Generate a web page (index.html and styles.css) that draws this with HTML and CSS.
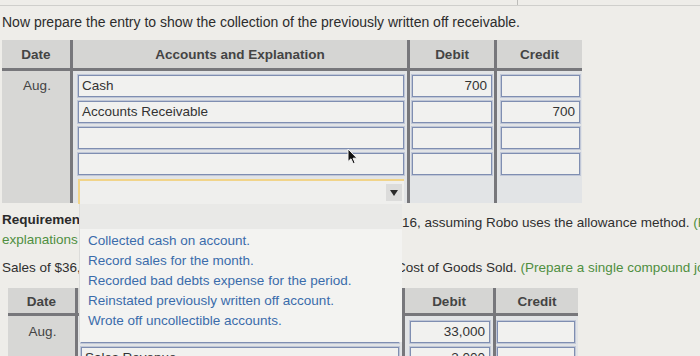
FILE: index.html
```html
<!DOCTYPE html>
<html lang="en">
<head>
<meta charset="utf-8">
<title>Journal entry</title>
<link rel="stylesheet" href="styles.css">
</head>
<body>
<div class="page">
  <div class="topbar"><span class="topbar-split"></span></div>
  <p class="lead">Now prepare the entry to show the collection of the previously written off receivable.</p>

  <div class="jt jt-one">
    <div class="hd">Date</div>
    <div class="hd bl">Accounts and Explanation</div>
    <div class="hd bl">Debit</div>
    <div class="hd bl">Credit</div>

    <div class="col col-date"><span class="date-txt">Aug.</span></div>
    <div class="col col-acct bl">
      <div class="field">Cash</div>
      <div class="field">Accounts Receivable</div>
      <div class="field"></div>
      <div class="field"></div>
      <div class="select">
        <span class="select-btn"><span class="tri"></span></span>
        <div class="menu">
          <div class="opt opt-blank"></div>
          <div class="opt">Collected cash on account.</div>
          <div class="opt">Record sales for the month.</div>
          <div class="opt">Recorded bad debts expense for the period.</div>
          <div class="opt">Reinstated previously written off account.</div>
          <div class="opt">Wrote off uncollectible accounts.</div>
        </div>
      </div>
    </div>
    <div class="col col-debit bl">
      <div class="field num">700</div>
      <div class="field num"></div>
      <div class="field num"></div>
      <div class="field num"></div>
    </div>
    <div class="col col-credit bl">
      <div class="field num"></div>
      <div class="field num">700</div>
      <div class="field num"></div>
      <div class="field num"></div>
    </div>
  </div>

  <div class="req">
    <div class="req-line l1">
      <span class="req-left"><b>Requirement</b></span>
      <span class="req-right r1">16, assuming Robo uses the allowance method. <span class="green">(Record debits first, then credits.</span></span>
    </div>
    <div class="req-line l2">
      <span class="req-left green">explanations</span>
      <span class="req-right"></span>
    </div>
    <div class="req-line l3">
      <span class="req-left narrow">Sales of $36,000</span>
      <span class="req-right shift">Cost of Goods Sold. <span class="green">(Prepare a single compound journal entry.)</span></span>
    </div>
  </div>

  <div class="jt jt-two">
    <div class="hd">Date</div>
    <div class="hd bl"></div>
    <div class="hd bl">Debit</div>
    <div class="hd bl">Credit</div>

    <div class="col col-date"><span class="date-txt">Aug.</span></div>
    <div class="col col-acct bl">
      <div class="field"></div>
      <div class="field">Sales Revenue</div>
    </div>
    <div class="col col-debit bl">
      <div class="field num">33,000</div>
      <div class="field num">3,000</div>
    </div>
    <div class="col col-credit bl">
      <div class="field num"></div>
      <div class="field num"></div>
    </div>
  </div>

  <svg class="cursor" width="12" height="17" viewBox="0 0 12 17" aria-hidden="true">
    <path d="M1 1 L1 13.5 L4 10.8 L6.2 15.6 L8.1 14.8 L6 10.2 L10 10.2 Z" fill="#111" stroke="#f4f4f4" stroke-width="1"/>
  </svg>
</div>
</body>
</html>
```

FILE: styles.css
```css
* { box-sizing: border-box; }

html, body {
  margin: 0;
  padding: 0;
  background: #eeede9;
  overflow: hidden;
}

body {
  font-family: "Liberation Sans", Arial, sans-serif;
  font-size: 13.5px;
  color: #333;
  width: 700px;
  height: 356px;
}

.page {
  position: relative;
  width: 700px;
  height: 356px;
  overflow: hidden;
}

.topbar {
  height: 6px;
  border-bottom: 1px solid #cfcfcc;
  position: relative;
}
.topbar-split {
  position: absolute;
  left: 517px;
  top: 0;
  width: 1px;
  height: 5px;
  background: #bdbdba;
}

.lead {
  margin: 8px 0 0 2px;
  font-size: 14px;
  line-height: 16px;
  height: 16px;
  white-space: nowrap;
  color: #2c2c2c;
}

/* journal tables */
.jt {
  display: grid;
}
.jt-one {
  margin: 10px 0 0 2px;
  width: 580px;
  grid-template-columns: 68px 337px 87px 88px;
}
.jt-two {
  margin: 0 0 0 8px;
  width: 570px;
  grid-template-columns: 67px 327px 91px 85px;
}

.hd {
  height: 31px;
  background: #d5d5d3;
  border-bottom: 3px solid #77777b;
  display: flex;
  align-items: center;
  justify-content: center;
  font-weight: bold;
  color: #444;
  padding-top: 1px;
}
.jt-two .hd { height: 28px; }

.bl { border-left: 3px solid #77777b; }

.col {
  display: flex;
  flex-direction: column;
  gap: 4px;
  padding-top: 4px;
  background: #e2e4e6;
}
.col-date {
  background: #d7d7d5;
  align-items: center;
}
.date-txt {
  color: #444;
  line-height: 22px;
  padding-left: 2px;
}

.jt-one .col { height: 132px; }
.jt-one .col-acct { padding: 4px 3px 0 5px; }
.jt-one .col-debit { padding: 4px 2px 0 2px; }
.jt-one .col-credit { padding: 4px 2px 0 4px; }

.jt-two .col { height: 60px; padding-top: 5px; }
.jt-two .col-date { padding-top: 5px; }
.jt-two .col-acct { padding-left: 3px; padding-right: 3px; }
.jt-two .col-debit { padding-left: 5px; padding-right: 3px; }
.jt-two .col-credit { padding-left: 1px; padding-right: 3px; }

.field {
  height: 22px;
  background: #f1f1ef;
  border: 1px solid #7f8eb1;
  box-shadow: 0 0 0 1px rgba(150, 165, 198, 0.45);
  line-height: 20px;
  padding: 0 3px;
  white-space: nowrap;
  overflow: hidden;
  color: #333;
  flex: none;
}
.field.num {
  text-align: right;
  padding-right: 4px;
}

.select {
  position: relative;
  height: 25px;
  background: #efefed;
  border: 2px solid #f1d48a;
  border-bottom: none;
  border-right: none;
  flex: none;
}
.select-btn {
  position: absolute;
  right: 2px;
  top: 3px;
  width: 16px;
  height: 17px;
  background: #dcdcdb;
  display: flex;
  align-items: center;
  justify-content: center;
}
.tri {
  width: 0;
  height: 0;
  border-left: 4px solid transparent;
  border-right: 4px solid transparent;
  border-top: 6px solid #2b2b2b;
}

.menu {
  position: absolute;
  left: 0;
  top: 23px;
  width: 322px;
  height: 138px;
  background: #f3f3f1;
  z-index: 5;
  box-shadow: -1px 0 0 #dcdcda;
}
.opt {
  height: 20px;
  line-height: 20px;
  padding-left: 8px;
  color: #3a6cab;
  white-space: nowrap;
}
.opt-blank {
  height: 25px;
  background: #e9e9e7;
  margin-bottom: 2px;
}

/* requirement text */
.req {
  padding: 7px 0 0 2px;
  height: 85px;
}
.req-line {
  display: grid;
  grid-template-columns: 78px auto;
  column-gap: 322px;
  line-height: 20px;
  height: 20px;
  white-space: nowrap;
}
.req-line.l3 { margin-top: 8px; }
.req-left {
  overflow: hidden;
  color: #2f2f2f;
}
.req-left.narrow { padding-right: 2px; }
.req-left b { color: #2a2a2a; }
.req-right { color: #2f2f2f; }
.req-right.r1 { position: relative; top: 3px; }
.req-right.shift { margin-left: -6px; }
.green { color: #4f8f3f; }

.cursor {
  position: absolute;
  left: 347px;
  top: 148px;
  z-index: 6;
}
```
